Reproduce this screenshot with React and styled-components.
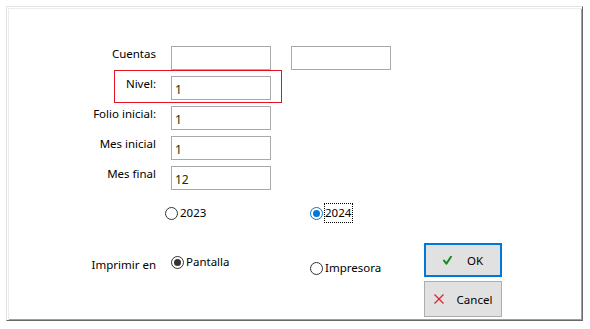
import styled, { createGlobalStyle } from "styled-components";

const Global = createGlobalStyle`
  body {
    margin: 0;
    background: #ffffff;
    font-family: "Noto Sans", "Liberation Sans", sans-serif;
    font-size: 11.5px;
    color: #000000;
  }
`;

const Frame = styled.div`
  box-sizing: border-box;
  margin: 6px;
  width: 577px;
  height: 315px;
  padding: 39px 0 0 0;
  border: 1px solid;
  border-color: #e3e3e3 #696969 #696969 #e3e3e3;
  box-shadow: inset 1px 1px 0 #ffffff, inset 2px 2px 0 #ececec,
    inset -1px -1px 0 #a0a0a0;
  display: flex;
  flex-direction: column;
`;

const Fields = styled.div`
  display: flex;
  flex-direction: column;
  gap: 6px;
`;

const Row = styled.div`
  position: relative;
  display: flex;
  align-items: flex-start;
`;

const Label = styled.label`
  width: 149px;
  margin-right: 15px;
  text-align: right;
  line-height: 16px;
  padding-top: ${(p) => p.$top || 0}px;
  white-space: nowrap;
`;

const Input = styled.input`
  box-sizing: border-box;
  width: 100px;
  height: 24px;
  margin: 0 0 0 ${(p) => p.$gap || 0}px;
  padding: 2px 3px 0;
  border: 1px solid #a9a9a9;
  background: #ffffff;
  font-family: inherit;
  font-size: 12px;
  color: #063806;
  outline: none;
`;

const Highlight = styled.div`
  position: absolute;
  left: 107px;
  top: -6px;
  width: 168px;
  height: 33px;
  box-sizing: border-box;
  border: 1px solid #e81123;
  pointer-events: none;
`;

const YearRow = styled.div`
  display: grid;
  grid-template-columns: 158px 145px auto;
  margin-top: 13px;
  height: 20px;
`;

const Bottom = styled.div`
  display: grid;
  grid-template-columns: 164px 139px 114px 80px;
  margin-top: 20px;
  align-items: start;
`;

const Radio = styled.div`
  grid-column: ${(p) => p.$col};
  display: flex;
  align-items: center;
  height: 20px;
  margin-top: ${(p) => p.$top || 0}px;
`;

const Circle = styled.span`
  box-sizing: border-box;
  width: 13px;
  height: 13px;
  border-radius: 50%;
  border: 1px solid ${(p) => (p.$on ? p.$color : "#333333")};
  background: #ffffff;
  display: flex;
  align-items: center;
  justify-content: center;
  &::after {
    content: "";
    display: ${(p) => (p.$on ? "block" : "none")};
    width: 7px;
    height: 7px;
    border-radius: 50%;
    background: ${(p) => p.$color};
  }
`;

const RadioText = styled.span`
  line-height: 16px;
  padding: 1px 1px 1px 0;
  margin-left: 1px;
  border: 1px dotted ${(p) => (p.$focus ? "#000000" : "transparent")};
`;

const Buttons = styled.div`
  grid-column: 4;
  display: flex;
  flex-direction: column;
  gap: 4px;
`;

const Button = styled.button`
  box-sizing: border-box;
  width: 78px;
  height: ${(p) => (p.$primary ? 34 : 36)}px;
  border: ${(p) => (p.$primary ? "2px solid #0078d7" : "1px solid #adadad")};
  background: #e1e1e1;
  display: flex;
  align-items: center;
  justify-content: center;
  gap: ${(p) => (p.$primary ? 15 : 13)}px;
  font-family: inherit;
  font-size: 11.5px;
  color: #000000;
  padding: 0;
`;

const RadioOption = ({ col, top, on, color = "#333333", focus, children }) => (
  <Radio $col={col} $top={top}>
    <Circle $on={on} $color={color} />
    <RadioText $focus={focus}>{children}</RadioText>
  </Radio>
);

const App = () => {
  return (
    <>
      <Global />
      <Frame>
        <Fields>
          <Row>
            <Label>Cuentas</Label>
            <Input defaultValue="" />
            <Input $gap={20} defaultValue="" />
          </Row>
          <Row>
            <Label>Nivel:</Label>
            <Input defaultValue="1" />
            <Highlight />
          </Row>
          <Row>
            <Label>Folio inicial:</Label>
            <Input defaultValue="1" />
          </Row>
          <Row>
            <Label>Mes inicial</Label>
            <Input defaultValue="1" />
          </Row>
          <Row>
            <Label>Mes final</Label>
            <Input defaultValue="12" />
          </Row>
        </Fields>

        <YearRow>
          <RadioOption col={2}>2023</RadioOption>
          <RadioOption col={3} on color="#0078d7" focus>
            2024
          </RadioOption>
        </YearRow>

        <Bottom>
          <Label $top={14}>Imprimir en</Label>
          <RadioOption col={2} top={9} on>
            Pantalla
          </RadioOption>
          <RadioOption col={3} top={15}>
            Impresora
          </RadioOption>
          <Buttons>
            <Button $primary>
              <svg width="9" height="9" viewBox="0 0 9 9">
                <path
                  d="M1 4.6 L3.4 7.6 L8 0.8"
                  fill="none"
                  stroke="#178a17"
                  strokeWidth="2"
                  strokeLinecap="round"
                  strokeLinejoin="round"
                />
              </svg>
              OK
            </Button>
            <Button>
              <svg width="10" height="10" viewBox="0 0 10 10">
                <path
                  d="M0.5 0.5 L9.5 9.5 M9.5 0.5 L0.5 9.5"
                  stroke="#d7262e"
                  strokeWidth="1.3"
                />
              </svg>
              Cancel
            </Button>
          </Buttons>
        </Bottom>
      </Frame>
    </>
  );
};

export default App;
